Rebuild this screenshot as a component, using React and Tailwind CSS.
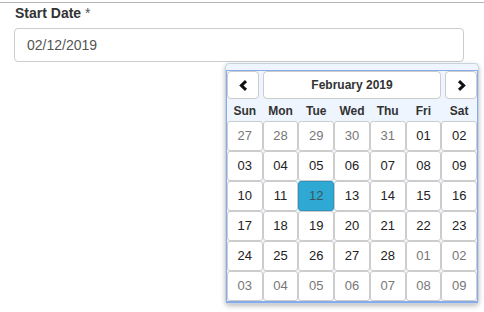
import React from "react";

const rows = [
  [["27", 1], ["28", 1], ["29", 1], ["30", 1], ["31", 1], ["01", 0], ["02", 0]],
  [["03", 0], ["04", 0], ["05", 0], ["06", 0], ["07", 0], ["08", 0], ["09", 0]],
  [["10", 0], ["11", 0], ["12", 2], ["13", 0], ["14", 0], ["15", 0], ["16", 0]],
  [["17", 0], ["18", 0], ["19", 0], ["20", 0], ["21", 0], ["22", 0], ["23", 0]],
  [["24", 0], ["25", 0], ["26", 0], ["27", 0], ["28", 0], ["01", 1], ["02", 1]],
  [["03", 1], ["04", 1], ["05", 1], ["06", 1], ["07", 1], ["08", 1], ["09", 1]],
];

const days = ["Sun", "Mon", "Tue", "Wed", "Thu", "Fri", "Sat"];

function Chevron({ dir }) {
  return (
    <svg width="9" height="11" viewBox="0 0 9 11">
      <path
        d={dir === "left" ? "M7 1.2 L2.4 5.5 L7 9.8" : "M2 1.2 L6.6 5.5 L2 9.8"}
        fill="none"
        stroke="#111"
        strokeWidth="3"
        strokeLinecap="butt"
        strokeLinejoin="miter"
      />
    </svg>
  );
}

export default function App() {
  return (
    <div
      className="relative w-[484px] h-[312px] bg-white overflow-hidden"
      style={{ fontFamily: '"Liberation Sans", Arial, sans-serif' }}
    >
      <div className="h-px bg-[#b4b4b4] mt-[2px]" />
      <div className="px-[15px] text-[14px] leading-[20px] font-bold text-[#333] mb-[5px]">
        Start Date <span className="font-normal text-[#555]">*</span>
      </div>
      <div className="ml-[14px] w-[450px] h-[34px] border border-[#ccc] rounded-[4px] flex items-center pl-[12px] text-[14px] text-[#555]">
        02/12/2019
      </div>

      <div className="absolute left-[225px] top-[63px] w-[254px] border border-[#c9d2de] rounded-[4px] bg-[#eef5fe] pt-[6px] shadow-[0_2px_5px_rgba(0,0,0,0.25)]">
        <div className="border border-b-2 border-[#88acea] bg-[#eef5fe]">
          <div className="flex gap-[4px] h-[28px]">
            <div className="w-[32px] bg-white border border-[#ccc] rounded-[4px] flex items-center justify-center">
              <Chevron dir="left" />
            </div>
            <div className="flex-1 bg-white border border-[#ccc] rounded-[4px] flex items-center justify-center text-[12px] font-bold text-[#333]">
              February 2019
            </div>
            <div className="w-[32px] bg-white border border-[#ccc] rounded-[4px] flex items-center justify-center">
              <Chevron dir="right" />
            </div>
          </div>
          <div className="grid grid-cols-7 h-[22px] items-center">
            {days.map((d) => (
              <div key={d} className="text-center text-[12px] font-bold text-[#333] pt-[1px]">
                {d}
              </div>
            ))}
          </div>
          <div className="grid grid-cols-7">
            {rows.map((r, i) =>
              r.map(([n, t], j) => (
                <div
                  key={i + "-" + j}
                  className={
                    t === 2
                      ? "h-[30px] flex items-center justify-center text-[13px] border border-[#2a96bd] rounded-[3px] bg-[#2fa9d3] text-[#3b5560]"
                      : t === 1
                      ? "h-[30px] flex items-center justify-center text-[13px] border border-[#ccc] rounded-[3px] bg-white text-[#777]"
                      : "h-[30px] flex items-center justify-center text-[13px] border border-[#ccc] rounded-[3px] bg-white text-[#222]"
                  }
                >
                  {n}
                </div>
              ))
            )}
          </div>
        </div>
      </div>
    </div>
  );
}
